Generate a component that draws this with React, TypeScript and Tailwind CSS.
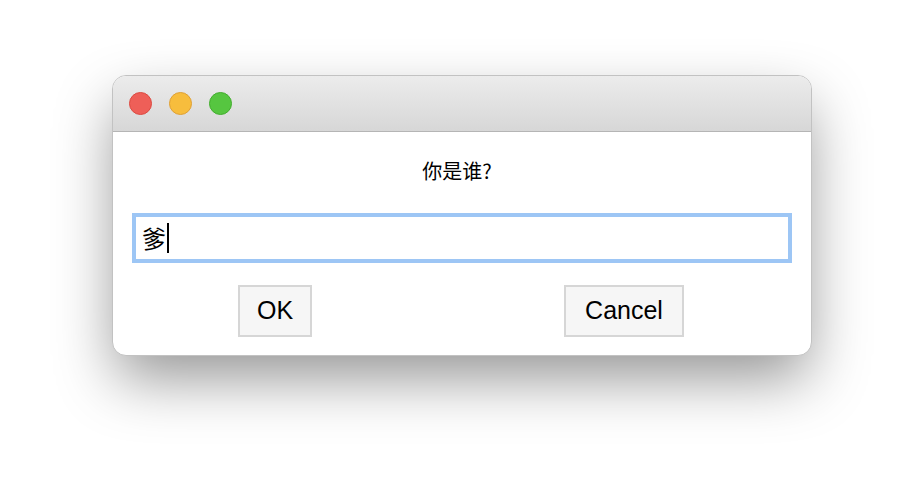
import React from "react";

export default function App() {
  return (
    <div className="w-[924px] h-[504px] bg-white overflow-hidden pt-[75px] pl-[112px]">
      <div className="w-[700px] h-[281px] rounded-[14px] border border-[#c2c2c2] bg-white overflow-hidden shadow-[0_26px_60px_-4px_rgba(0,0,0,0.42)] flex flex-col">
        <div className="h-[56px] shrink-0 bg-gradient-to-b from-[#ececec] to-[#d7d7d7] border-b border-[#b5b5b5] flex items-center pl-[16px] gap-[17px]">
          <div className="w-[23px] h-[23px] rounded-full bg-[#ee5f58] border border-[#dc4a41]" />
          <div className="w-[23px] h-[23px] rounded-full bg-[#f7bd3d] border border-[#dfa035]" />
          <div className="w-[23px] h-[23px] rounded-full bg-[#56c640] border border-[#43ad2e]" />
        </div>
        <div className="flex-1 flex flex-col">
          <div
            className="pt-[27px] pr-[10px] text-center text-[20px] leading-[24px] text-black"
            style={{ fontFamily: '"Noto Sans CJK SC", "Noto Sans", sans-serif' }}
          >
            你是谁?
          </div>
          <div className="mt-[30px] mx-[19px] h-[50px] border-[4px] border-[#9dc6f5] bg-white flex items-center pl-[6px]">
            <span
              className="text-[24px] leading-[30px] text-black"
              style={{ fontFamily: '"Noto Sans CJK SC", sans-serif' }}
            >
              爹
            </span>
            <span className="w-[2px] h-[30px] bg-black ml-[1px]" />
          </div>
          <div
            className="flex mt-[22px] pl-[125px]"
            style={{ fontFamily: '"Liberation Sans", Arial, sans-serif' }}
          >
            <div className="w-[74px] h-[52px] border-2 border-[#d6d6d6] bg-[#f6f6f6] flex items-center justify-center text-[25px] text-black">
              OK
            </div>
            <div className="ml-[252px] w-[120px] h-[52px] border-2 border-[#d6d6d6] bg-[#f6f6f6] flex items-center justify-center text-[25px] text-black">
              Cancel
            </div>
          </div>
        </div>
      </div>
    </div>
  );
}
